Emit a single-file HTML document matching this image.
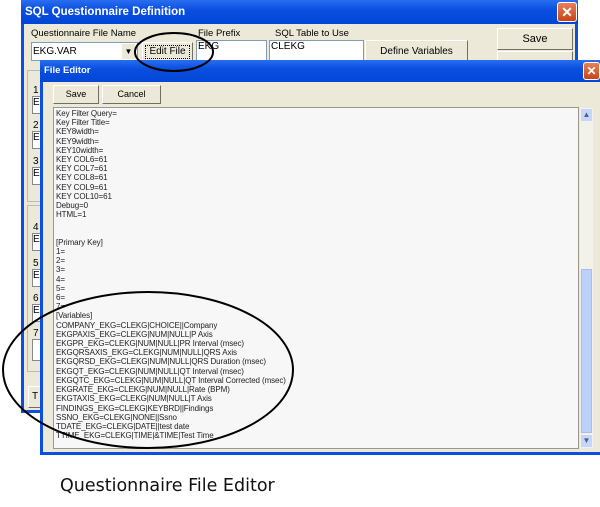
<!DOCTYPE html>
<html><head><style>
body{margin:0;width:600px;height:507px;background:#fff;position:relative;overflow:hidden;font-family:"Liberation Sans",sans-serif}
.abs{position:absolute}
.tb{background:linear-gradient(#2a6ef0,#0a4fe0 40%,#0246d6);color:#fff;font-weight:bold;font-size:12px}
.x{position:absolute;width:18px;height:18px;background:linear-gradient(#e8805a,#c84418);border:1px solid #fff;border-radius:3px;color:#fff;font-size:14px;line-height:18px;text-align:center;font-weight:bold}
.btn{position:absolute;background:#ece9d8;border:1px solid #8a877a;border-color:#fff #716f64 #716f64 #fff;font-size:10px;text-align:center;color:#000}
.lbl{position:absolute;font-size:10px;color:#000}
.inp{position:absolute;background:#fff;border:1px solid #7f9db9;font-size:10px}
#txt{position:absolute;left:53px;top:107px;width:526px;height:342px;background:#f7f7f7;border:1px solid #9a988c;font-size:8px;line-height:9.2px;color:#222;padding:1px 0 0 2px;box-sizing:border-box;letter-spacing:-0.1px}
</style></head><body>
<div class="abs" style="left:21px;top:0;width:557px;height:413px;background:#0a4fe0"></div>
<div class="abs tb" style="left:21px;top:0;width:557px;height:24px;line-height:24px;padding-left:4px;box-sizing:border-box;font-size:11.5px">SQL Questionnaire Definition</div>
<div class="x" style="left:557px;top:2px">✕</div>
<div class="abs" style="left:24px;top:24px;width:551px;height:386px;background:#ece9d8"></div>
<div class="lbl" style="left:31px;top:28px;font-size:9.5px">Questionnaire File Name</div>
<div class="inp" style="left:31px;top:42px;width:104px;height:17px;line-height:17px;padding-left:1px">EKG.VAR</div>
<div class="abs" style="left:122px;top:44px;width:13px;height:15px;background:#ece9d8;font-size:8px;text-align:center;line-height:16px">▼</div>
<div class="btn" style="left:142px;top:42px;width:49px;height:18px;line-height:18px;outline:1px dotted #000;outline-offset:-4px;font-size:10px">Edit File</div>
<div class="lbl" style="left:198px;top:28px;font-size:9.5px">File Prefix</div>
<div class="inp" style="left:196px;top:40px;width:68px;height:25px;padding-left:1px">EKG</div>
<div class="lbl" style="left:275px;top:28px;font-size:9.5px">SQL Table to Use</div>
<div class="inp" style="left:269px;top:40px;width:92px;height:25px;padding-left:1px">CLEKG</div>
<div class="btn" style="left:365px;top:40px;width:101px;height:21px;line-height:21px">Define Variables</div>
<div class="btn" style="left:497px;top:28px;width:74px;height:20px;line-height:20px;font-size:11px">Save</div>
<div class="btn" style="left:497px;top:51px;width:74px;height:12px"></div>
<div class="abs" style="left:27px;top:70px;width:15px;height:130px;border:1px solid #bbb;border-right:none"></div>
<div class="abs" style="left:27px;top:205px;width:15px;height:165px;border:1px solid #bbb;border-right:none"></div>
<div class="lbl" style="left:33px;top:85px">1</div><div class="inp" style="left:32px;top:96px;width:10px;height:16px;border-color:#888">E</div>
<div class="lbl" style="left:33px;top:120px">2</div><div class="inp" style="left:32px;top:131px;width:10px;height:16px;border-color:#888">E</div>
<div class="lbl" style="left:33px;top:156px">3</div><div class="inp" style="left:32px;top:167px;width:10px;height:16px;border-color:#888">E</div>
<div class="lbl" style="left:33px;top:222px">4</div><div class="inp" style="left:32px;top:233px;width:10px;height:16px;border-color:#888">E</div>
<div class="lbl" style="left:33px;top:258px">5</div><div class="inp" style="left:32px;top:269px;width:10px;height:16px;border-color:#888">E</div>
<div class="lbl" style="left:33px;top:293px">6</div><div class="inp" style="left:32px;top:304px;width:10px;height:16px;border-color:#888">E</div>
<div class="lbl" style="left:33px;top:328px">7</div><div class="inp" style="left:32px;top:339px;width:10px;height:20px;border-color:#888"></div>
<div class="btn" style="left:28px;top:386px;width:14px;height:20px;line-height:20px;text-align:left;padding-left:3px">T</div>
<div class="abs" style="left:40px;top:60px;width:560px;height:395px;background:#0a4fe0"></div>
<div class="abs tb" style="left:40px;top:60px;width:560px;height:22px;line-height:22px;padding-left:4px;box-sizing:border-box;font-size:9.5px">File Editor</div>
<div class="x" style="left:583px;top:62px;width:15px;height:16px;line-height:16px;font-size:12px">✕</div>
<div class="abs" style="left:43px;top:82px;width:557px;height:370px;background:#ece9d8"></div>
<div class="btn" style="left:53px;top:85px;width:44px;height:17px;line-height:17px;font-size:9px">Save</div>
<div class="btn" style="left:102px;top:85px;width:57px;height:17px;line-height:17px;font-size:9px">Cancel</div>
<div id="txt">Key Filter Query=<br>Key Filter Title=<br>KEY8width=<br>KEY9width=<br>KEY10width=<br>KEY COL6=61<br>KEY COL7=61<br>KEY COL8=61<br>KEY COL9=61<br>KEY COL10=61<br>Debug=0<br>HTML=1<br><br><br>[Primary Key]<br>1=<br>2=<br>3=<br>4=<br>5=<br>6=<br>7=<br>[Variables]<br>COMPANY_EKG=CLEKG|CHOICE||Company<br>EKGPAXIS_EKG=CLEKG|NUM|NULL|P Axis<br>EKGPR_EKG=CLEKG|NUM|NULL|PR Interval (msec)<br>EKGQRSAXIS_EKG=CLEKG|NUM|NULL|QRS Axis<br>EKGQRSD_EKG=CLEKG|NUM|NULL|QRS Duration (msec)<br>EKGQT_EKG=CLEKG|NUM|NULL|QT Interval (msec)<br>EKGQTC_EKG=CLEKG|NUM|NULL|QT Interval Corrected (msec)<br>EKGRATE_EKG=CLEKG|NUM|NULL|Rate (BPM)<br>EKGTAXIS_EKG=CLEKG|NUM|NULL|T Axis<br>FINDINGS_EKG=CLEKG|KEYBRD||Findings<br>SSNO_EKG=CLEKG|NONE||Ssno<br>TDATE_EKG=CLEKG|DATE||test date<br>TTIME_EKG=CLEKG|TIME|&amp;TIME|Test Time</div>
<div class="abs" style="left:580px;top:108px;width:13px;height:340px;background:#f2f1ea"></div>
<div class="abs" style="left:581px;top:109px;width:11px;height:12px;background:#c5d5fb;font-size:8px;color:#4d6185;text-align:center;line-height:12px">▲</div>
<div class="abs" style="left:581px;top:269px;width:11px;height:164px;background:#bcd0fa;border:1px solid #a7bdf0;box-sizing:border-box"></div>
<div class="abs" style="left:581px;top:435px;width:11px;height:12px;background:#c5d5fb;font-size:8px;color:#4d6185;text-align:center;line-height:12px">▼</div>
<svg class="abs" style="left:0;top:0" width="600" height="507">
<ellipse cx="174" cy="52" rx="39" ry="19" fill="none" stroke="#000" stroke-width="2"/>
<ellipse cx="148" cy="370" rx="145" ry="78" fill="none" stroke="#000" stroke-width="2"/>
</svg>
<div class="abs" style="left:60px;top:476px;font-family:'DejaVu Sans',sans-serif;font-size:17.5px;color:#111">Questionnaire File Editor</div>
</body></html>
